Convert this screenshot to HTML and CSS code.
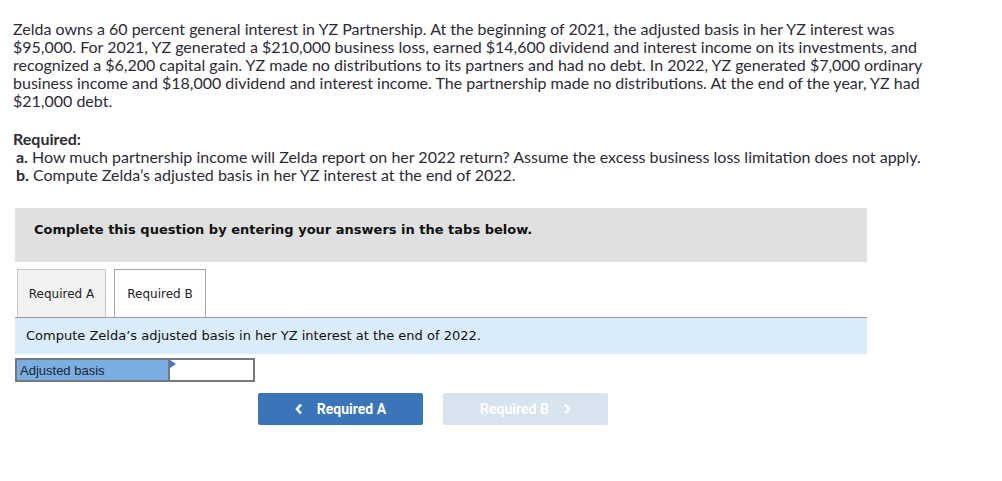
FILE: index.html
```html
<!DOCTYPE html>
<html>
<head>
<meta charset="utf-8">
<link rel="stylesheet" href="styles.css">
</head>
<body>
<div class="page">
  <p class="intro">Zelda owns a 60 percent general interest in YZ Partnership. At the beginning of 2021, the adjusted basis in her YZ interest was $95,000. For 2021, YZ generated a $210,000 business loss, earned $14,600 dividend and interest income on its investments, and recognized a $6,200 capital gain. YZ made no distributions to its partners and had no debt. In 2022, YZ generated $7,000 ordinary business income and $18,000 dividend and interest income. The partnership made no distributions. At the end of the year, YZ had $21,000 debt.</p>
  <div class="required">
    <div class="req-title">Required:</div>
    <div class="req-item"><b>a.</b> How much partnership income will Zelda report on her 2022 return? Assume the excess business loss limitation does not apply.</div>
    <div class="req-item"><b>b.</b> Compute Zelda’s adjusted basis in her YZ interest at the end of 2022.</div>
  </div>
  <div class="notice">Complete this question by entering your answers in the tabs below.</div>
  <div class="tabs">
    <div class="tab">Required A</div>
    <div class="tab active">Required B</div>
  </div>
  <div class="band">Compute Zelda’s adjusted basis in her YZ interest at the end of 2022.</div>
  <table class="grid">
    <tr>
      <td class="label">Adjusted basis</td>
      <td class="input"><span class="tri"></span></td>
    </tr>
  </table>
  <div class="nav">
    <div class="btn prev"><svg class="chev left" width="8" height="12" viewBox="0 0 8 12"><path d="M6 1.5 L2 6 L6 10.5" fill="none" stroke="#fff" stroke-width="2.6"/></svg>Required A</div>
    <div class="btn next">Required B<svg class="chev right" width="8" height="12" viewBox="0 0 8 12"><path d="M2 1.5 L6 6 L2 10.5" fill="none" stroke="#fff" stroke-width="2.6"/></svg></div>
  </div>
</div>
</body>
</html>
```
FILE: styles.css
```css
html, body { margin: 0; padding: 0; background: #fff; }
.page { padding: 20px 0 0 13px; width: 920px; }
.intro {
  margin: 0;
  font-family: Lato, "Liberation Sans", sans-serif;
  font-size: 16px;
  line-height: 18px;
  color: #2d2a38;
  width: 910px;
}
.required {
  margin-top: 20px;
  font-family: Lato, "Liberation Sans", sans-serif;
  font-size: 16px;
  line-height: 18px;
  color: #2d2a38;
}
.req-title { font-weight: bold; }
.req-item { padding-left: 3px; }
.req-item b { font-weight: bold; }
.notice {
  margin: 24px 0 0 2px;
  width: 852px;
  height: 54px;
  box-sizing: border-box;
  padding: 14px 0 0 19px;
  background: #e0e0e0;
  font-family: "DejaVu Sans", Verdana, sans-serif;
  font-weight: bold;
  font-size: 13px;
  color: #111;
}
.tabs { display: flex; gap: 8px; margin: 7px 0 0 4px; height: 48px; }
.tab {
  box-sizing: border-box;
  width: 89px;
  height: 48px;
  border: 1px solid #c8c8c8;
  border-bottom: none;
  background: #f2f2f2;
  font-family: "DejaVu Sans", Tahoma, sans-serif;
  font-size: 12px;
  color: #222;
  display: flex;
  align-items: center;
  justify-content: center;
  padding-top: 1px;
}
.tab.active { background: #fff; border-color: #a8a8a8; width: 92px; }
.band {
  margin-left: 2px;
  width: 852px;
  height: 37px;
  box-sizing: border-box;
  border-top: 1px solid #999;
  background: #daecf9;
  font-family: "DejaVu Sans", Verdana, sans-serif;
  font-size: 13px;
  color: #111;
  padding: 10px 0 0 11px;
}
.grid {
  margin: 4px 0 0 2px;
  border-collapse: collapse;
}
.grid td { border: 2px solid #757a80; height: 20px; padding: 0; }
.label {
  width: 148px;
  background: #7aaee3;
  font-family: "Liberation Sans", Arial, sans-serif;
  font-size: 13px;
  color: #1c2430;
  padding-left: 3px !important;
}
.input { width: 83px; background: #fff; position: relative; }
.tri {
  position: absolute; left: 0; top: 0;
  width: 0; height: 0;
  border-top: 4px solid transparent;
  border-bottom: 4px solid transparent;
  border-left: 6px solid #3b78c2;
}
.nav { display: flex; gap: 20px; margin: 11px 0 0 245px; }
.btn {
  width: 165px;
  height: 32px;
  border-radius: 2px;
  display: flex;
  align-items: center;
  justify-content: center;
  font-family: Roboto, "Liberation Sans", sans-serif;
  font-weight: bold;
  font-size: 14px;
  color: #fff;
}
.btn.prev { background: #3a74b9; }
.btn.next { background: #d8e3f0; }
.chev.left { margin-right: 14px; }
.chev.right { margin-left: 14px; }
```
